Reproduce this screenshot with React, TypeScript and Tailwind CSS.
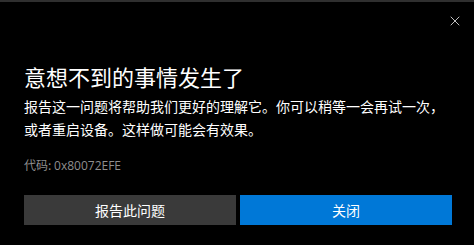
import { X } from "lucide-react";

const CJK = "font-['Microsoft_YaHei','Noto_Sans_CJK_SC',sans-serif]";

export default function App() {
  return (
    <div
      className={`flex h-[245px] w-[474px] flex-col border-t-2 border-[#2f2f2f] bg-black text-white ${CJK}`}
    >
      <div className="flex justify-end pr-[11px] pt-[11px]">
        <button
          type="button"
          aria-label="关闭"
          className="flex h-4 w-4 items-center justify-center text-[#e6e6e6]"
        >
          <X size={16} strokeWidth={1.25} />
        </button>
      </div>

      <div className="flex flex-col pl-6 pr-[22px]">
        <h1 className="mt-[33px] text-[22px] leading-[28px] font-normal">
          意想不到的事情发生了
        </h1>
        <p className="mt-[5px] text-[14px] leading-[23px]">
          报告这一问题将帮助我们更好的理解它。你可以稍等一会再试一次，或者重启设备。这样做可能会有效果。
        </p>
        <p className="mt-[14px] text-[12px] leading-[20px] text-[#8f8f8f]">
          代码:{" "}
          <span className="font-['Open_Sans','Noto_Sans',sans-serif]">0x80072EFE</span>
        </p>

        <div className="mt-[19px] grid grid-cols-2 gap-1">
          <button
            type="button"
            className="h-[30px] bg-[#3a3a3a] text-[14px] text-white"
          >
            报告此问题
          </button>
          <button
            type="button"
            className="h-[30px] bg-[#0078d7] text-[14px] text-white"
          >
            关闭
          </button>
        </div>
      </div>
    </div>
  );
}
